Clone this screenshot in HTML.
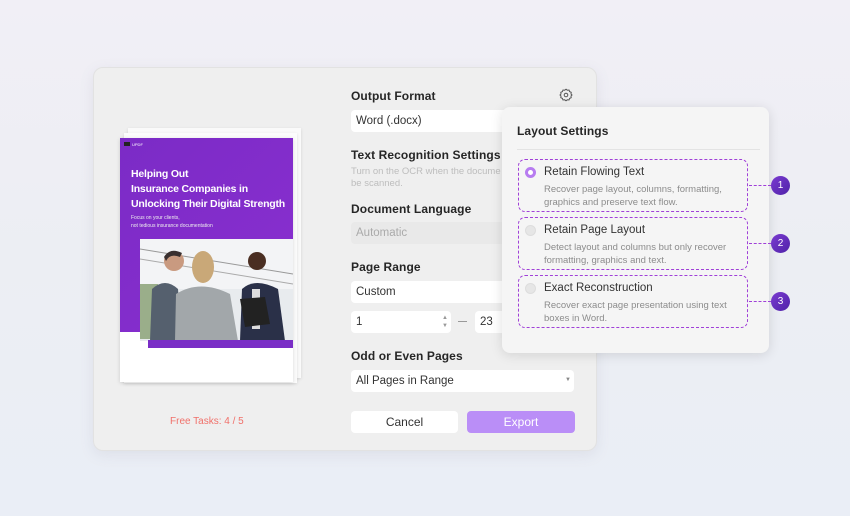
<!DOCTYPE html>
<html><head><meta charset="utf-8"><style>
*{margin:0;padding:0;box-sizing:border-box}
body{width:850px;height:516px;overflow:hidden;font-family:"Liberation Sans",sans-serif;background:linear-gradient(180deg,#f1eff6 0%,#eceef3 50%,#eaeef6 100%);position:relative}
.a{position:absolute}
.panel{left:93px;top:67px;width:504px;height:384px;background:#efefef;border-radius:10px;border:1px solid #e2e2e2;box-shadow:0 4px 14px rgba(120,120,150,.12)}
.lbl{font-size:12px;color:#262626;font-weight:600;letter-spacing:.1px}
.fld{background:#fff;border-radius:4px;height:22px;font-size:11.5px;color:#333;padding:5px 0 0 5px}
.pop{left:502px;top:107px;width:267px;height:246px;background:#f5f5f5;border-radius:8px;box-shadow:0 2px 12px rgba(0,0,0,.12)}
.opt{left:518px;width:230px;height:53px;border:1.4px dashed #a040d8;border-radius:7px}
.ot{font-size:11.5px;color:#333;position:absolute;left:25px;top:6px}
.od{font-size:9.5px;color:#8c8c8c;position:absolute;left:25px;top:23px;line-height:13px;width:205px}
.rad{position:absolute;left:6px;top:7px;width:11px;height:11px;border-radius:50%;background:#e6e6e6;border:1px solid #ddd}
.num{width:19px;height:19px;border-radius:50%;background:linear-gradient(135deg,#7a3bd0,#4f22a8);color:#fff;font-size:10px;text-align:center;line-height:19px;left:771px}
.ln{left:749px;width:22px;border-top:1.5px dashed #a040d8}
</style></head><body>
<div class="a panel"></div>
<div class="a" style="left:128px;top:128px;width:173px;height:250px;background:#fafafa;box-shadow:0 1px 3px rgba(0,0,0,.12)"></div>
<div class="a" style="left:124px;top:133px;width:173px;height:250px;background:#fcfcfc;box-shadow:0 1px 3px rgba(0,0,0,.12)"></div>
<div class="a" style="left:120px;top:138px;width:173px;height:244px;background:#fff;box-shadow:0 1px 4px rgba(0,0,0,.15)"></div>
<div class="a" style="left:120px;top:138px;width:173px;height:194px;background:linear-gradient(135deg,#7b2bc6,#8a2fd0)"></div>
<div class="a" style="left:124px;top:142px;width:6px;height:4px;background:#222"></div>
<div class="a" style="left:132px;top:142px;font-size:4px;color:#fff">UPDF</div>
<div class="a" style="left:131px;top:167px;font-size:10.5px;line-height:15px;color:#fff;font-weight:bold;letter-spacing:-.2px">Helping Out<br>Insurance Companies in<br>Unlocking Their Digital Strength</div>
<div class="a" style="left:131px;top:214px;font-size:5px;line-height:8px;color:#eee">Focus on your clients,<br>not tedious insurance documentation</div>
<svg class="a" style="left:140px;top:239px" width="153" height="102" viewBox="0 0 153 102">
<rect width="153" height="102" fill="#e8ebee"/>
<rect x="0" y="0" width="153" height="50" fill="#f3f4f6"/>
<line x1="0" y1="10" x2="153" y2="35" stroke="#999" stroke-width="1"/>
<line x1="0" y1="20" x2="153" y2="45" stroke="#aaa" stroke-width="1"/>
<rect x="0" y="45" width="18" height="55" fill="#9aae8a"/>
<path d="M10 102 L12 50 Q25 38 38 50 L42 102Z" fill="#55606e"/>
<circle cx="34" cy="22" r="10" fill="#c99a80"/>
<path d="M24 18 Q30 8 42 14 L40 18 Q30 14 26 22Z" fill="#3a3030"/>
<path d="M35 102 L36 55 Q60 40 90 55 L98 102Z" fill="#a2a7aa"/>
<ellipse cx="63" cy="28" rx="11" ry="16" fill="#c9a878"/>
<path d="M100 102 L102 50 Q115 38 138 50 L145 102Z" fill="#2a3048"/>
<circle cx="117" cy="22" r="9" fill="#4a2e22"/>
<rect x="112" y="50" width="8" height="40" fill="#ddd"/>
<path d="M100 60 L125 58 L130 85 L105 88Z" fill="#222"/>
</svg>
<div class="a" style="left:148px;top:340px;width:145px;height:8px;background:#7a2ec6"></div>
<div class="a" style="left:170px;top:416px;font-size:10px;color:#f0706a">Free Tasks: 4 / 5</div>

<div class="a lbl" style="left:351px;top:89px">Output Format</div>
<svg class="a" style="left:559px;top:88px" width="14" height="14" viewBox="0 0 14 14"><path d="M7 1.2 L8.3 2.2 L10 2 L10.6 3.6 L12.2 4.3 L12 6 L13 7 L12 8 L12.2 9.7 L10.6 10.4 L10 12 L8.3 11.8 L7 12.8 L5.7 11.8 L4 12 L3.4 10.4 L1.8 9.7 L2 8 L1 7 L2 6 L1.8 4.3 L3.4 3.6 L4 2 L5.7 2.2Z" fill="none" stroke="#555" stroke-width="1"/><circle cx="7" cy="7" r="1.8" fill="none" stroke="#555" stroke-width="1"/></svg>
<div class="a fld" style="left:351px;top:110px;width:160px">Word (.docx)</div>
<div class="a lbl" style="left:351px;top:148px">Text Recognition Settings</div>
<div class="a" style="left:351px;top:166px;font-size:9.5px;line-height:12px;color:#bdbdbd">Turn on the OCR when the docume<br>be scanned.</div>
<div class="a lbl" style="left:351px;top:202px">Document Language</div>
<div class="a fld" style="left:351px;top:222px;width:160px;background:#e9e9e9;color:#aaa">Automatic</div>
<div class="a lbl" style="left:351px;top:260px">Page Range</div>
<div class="a fld" style="left:351px;top:281px;width:160px">Custom</div>
<div class="a fld" style="left:351px;top:311px;width:100px">1</div>
<div class="a" style="left:442px;top:314px;font-size:6px;color:#999;line-height:8px">▲<br>▼</div>
<div class="a" style="left:458px;top:321px;width:9px;height:1px;background:#999"></div>
<div class="a fld" style="left:475px;top:311px;width:40px">23</div>
<div class="a lbl" style="left:351px;top:349px">Odd or Even Pages</div>
<div class="a fld" style="left:351px;top:370px;width:223px">All Pages in Range</div>
<div class="a" style="left:565px;top:377px;font-size:6px;color:#888">▼</div>
<div class="a" style="left:351px;top:411px;width:107px;height:22px;background:#fff;border-radius:4px;font-size:12px;color:#333;text-align:center;line-height:22px">Cancel</div>
<div class="a" style="left:467px;top:411px;width:108px;height:22px;background:#ba8ef7;border-radius:4px;font-size:12px;color:#fff;text-align:center;line-height:22px">Export</div>

<div class="a pop"></div>
<div class="a lbl" style="left:517px;top:124px">Layout Settings</div>
<div class="a" style="left:517px;top:149px;width:243px;height:1px;background:#e3e3e3"></div>
<div class="a opt" style="top:159px"><div class="rad" style="background:#fff;border:3px solid #b77cf0"></div><div class="ot">Retain Flowing Text</div><div class="od">Recover page layout, columns, formatting, graphics and preserve text flow.</div></div>
<div class="a opt" style="top:217px"><div class="rad"></div><div class="ot">Retain Page Layout</div><div class="od">Detect layout and columns but only recover formatting, graphics and text.</div></div>
<div class="a opt" style="top:275px"><div class="rad"></div><div class="ot">Exact Reconstruction</div><div class="od">Recover exact page presentation using text boxes in Word.</div></div>
<div class="a ln" style="top:185px"></div><div class="a ln" style="top:243px"></div><div class="a ln" style="top:301px"></div>
<div class="a num" style="top:176px">1</div>
<div class="a num" style="top:234px">2</div>
<div class="a num" style="top:292px">3</div>
</body></html>
